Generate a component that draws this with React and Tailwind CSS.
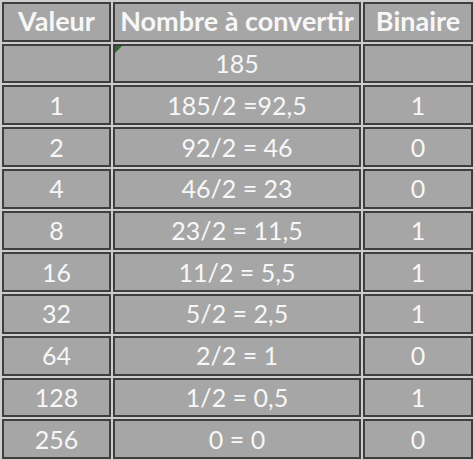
import React from 'react';

const rows = [
    ['', '185', ''],
    ['1', '185/2 =92,5', '1'],
    ['2', '92/2 = 46', '0'],
    ['4', '46/2 = 23', '0'],
    ['8', '23/2 = 11,5', '1'],
    ['16', '11/2 = 5,5', '1'],
    ['32', '5/2 = 2,5', '1'],
    ['64', '2/2 = 1', '0'],
    ['128', '1/2 = 0,5', '1'],
    ['256', '0 = 0', '0'],
];

const Cell = ({ children, bold, mark }) => (
    <div className={`relative flex items-center justify-center bg-[#a6a6a6] border-2 border-[#3f3f3f] text-[#f7f7f7] leading-none ${bold ? 'font-bold text-[27px] pb-[3px]' : 'text-[25px]'}`}>
        {mark && (
            <div className="absolute left-0 top-0 w-0 h-0 border-t-[7px] border-t-[#2f6b2f] border-r-[7px] border-r-transparent"></div>
        )}
        {children}
    </div>
);

const App = () => {
    return (
        <div
            className="w-[474px] h-[460px] bg-[#cdcdcd] grid grid-cols-[109px_248px_110px] grid-rows-[repeat(11,minmax(0,1fr))] gap-[2px] pt-[2px] pl-[2px] pr-[1px] pb-[1px]"
            style={{ fontFamily: 'Lato, "Open Sans", sans-serif' }}
        >
            <Cell bold>Valeur</Cell>
            <Cell bold>Nombre à convertir</Cell>
            <Cell bold>Binaire</Cell>
            {rows.map((r, i) => (
                <React.Fragment key={i}>
                    <Cell>{r[0]}</Cell>
                    <Cell mark={i === 0}>{r[1]}</Cell>
                    <Cell>{r[2]}</Cell>
                </React.Fragment>
            ))}
        </div>
    );
};

export default App;
